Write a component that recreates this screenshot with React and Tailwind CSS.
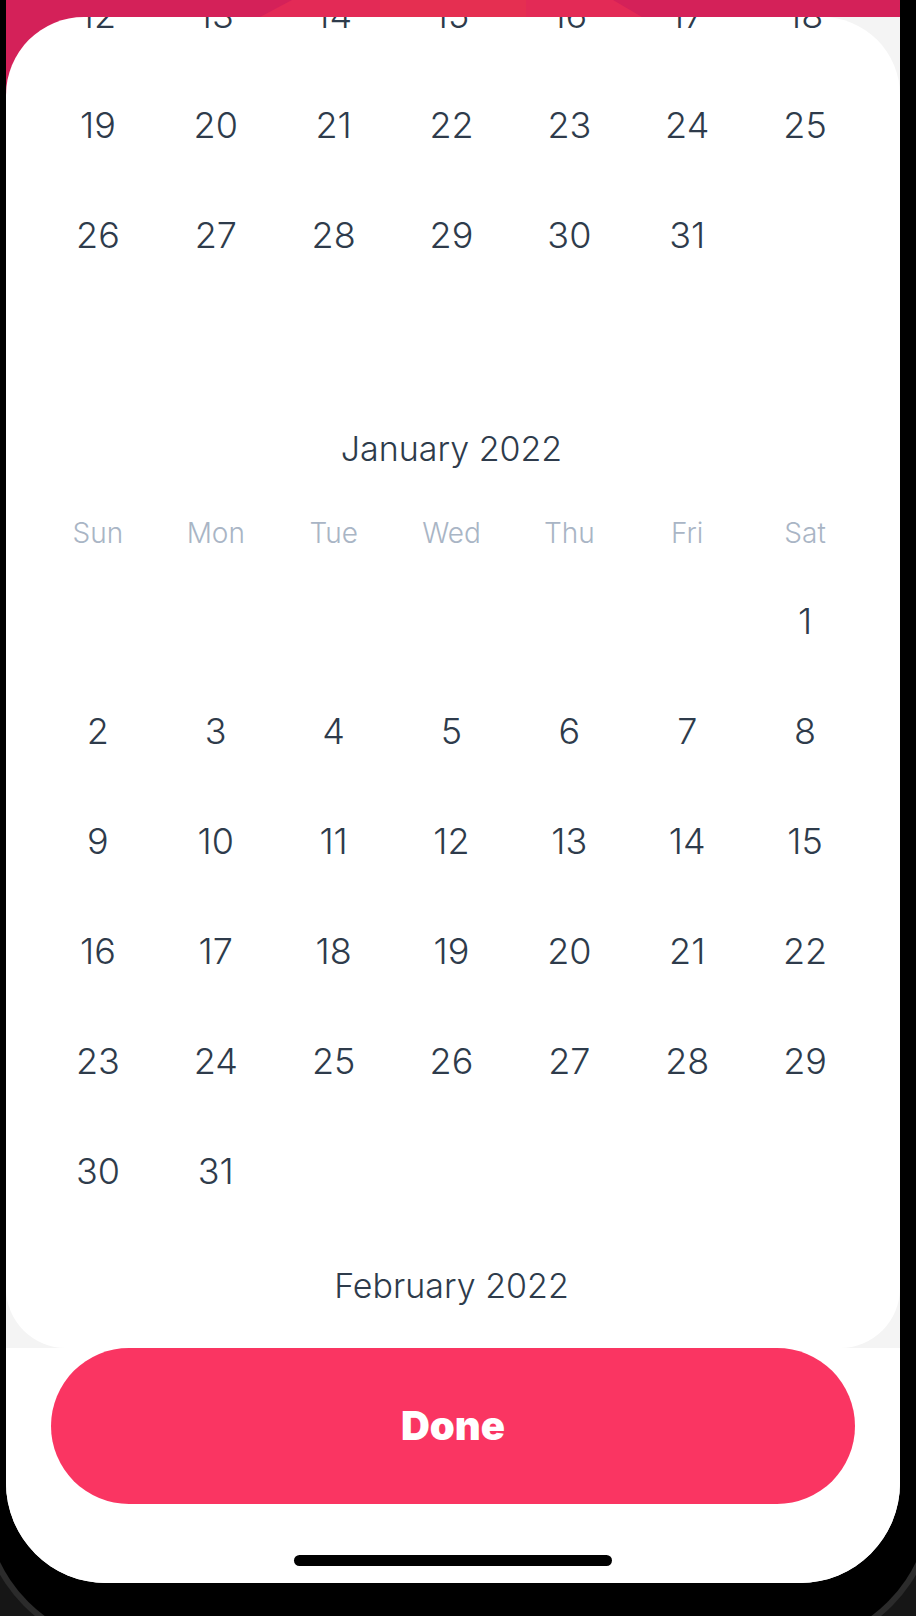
import React from 'react';

const WEEKDAYS = ['Sun', 'Mon', 'Tue', 'Wed', 'Thu', 'Fri', 'Sat'];

// builds week rows for a month, padding the first and last week with blanks
const buildWeeks = (year, month) => {
  const first = new Date(year, month, 1).getDay();
  const days = new Date(year, month + 1, 0).getDate();
  const cells = [...Array(first).fill(null), ...Array.from({ length: days }, (_, i) => i + 1)];
  while (cells.length % 7) cells.push(null);
  const weeks = [];
  for (let i = 0; i < cells.length; i += 7) weeks.push(cells.slice(i, i + 7));
  return weeks;
};

const MONTHS = [
  { label: 'December 2021', year: 2021, month: 11 },
  { label: 'January 2022', year: 2022, month: 0 },
  { label: 'February 2022', year: 2022, month: 1 },
];

const Month = ({ label, year, month }) => {
  const weeks = buildWeeks(year, month);
  return (
    <section className="min-h-[826px]">
      <h2 className="pt-[38px] text-center text-[34px] font-light leading-[44px] text-[#2e3b4b]">{label}</h2>
      <div className="grid grid-cols-7 pt-[44px] pb-[15px]">
        {WEEKDAYS.map((d) => (
          <span key={d} className="text-center text-[28px] font-light leading-[36px] text-[#a9b5c5]">
            {d}
          </span>
        ))}
      </div>
      {weeks.map((week, wi) => (
        <div key={wi} className="grid grid-cols-7">
          {week.map((day, di) => (
            <div key={di} className="flex h-[110px] items-center justify-center text-[36px] font-light text-[#2e3b4b]">
              {day}
            </div>
          ))}
        </div>
      ))}
    </section>
  );
};

const App = () => {
  return (
    <div className="h-[1616px] w-[916px] overflow-hidden bg-[#161616] font-['Inter','Noto_Sans',sans-serif]">
      <div className="-mx-[20px] h-[1650px] rounded-b-[150px] border-x-[6px] border-b-[6px] border-[#2b2b2b] bg-black">
        <div className="ml-[20px] flex h-[1583px] w-[894px] flex-col overflow-hidden rounded-b-[100px] bg-white">
          {/* strip of the screen underneath the sheet */}
          <svg width="894" height="17" viewBox="0 0 894 17" className="block shrink-0">
            <rect width="894" height="17" fill="#d42159" />
            <polygon points="286,0 607,0 636,17 254,17" fill="#e32a56" />
            <polygon points="374,0 520,0 520,17 374,17" fill="#e52f51" />
          </svg>

          <div className="h-[1331px] shrink-0 bg-[#f4f4f4] bg-[linear-gradient(#d42159,#d42159)] bg-[length:100px_100px] bg-no-repeat">
            <div className="h-full overflow-hidden rounded-t-[78px] rounded-b-[60px] bg-white">
              <div className="-mt-[454px] pl-[33px] pr-[36px]">
                {MONTHS.map((m) => (
                  <Month key={m.label} {...m} />
                ))}
              </div>
            </div>
          </div>

          <div className="flex flex-1 flex-col items-center bg-white">
            <button className="h-[156px] w-[804px] rounded-full bg-[#fa3562] text-[40px] font-black text-white">
              Done
            </button>
            <div className="mt-[51px] h-[11px] w-[318px] rounded-full bg-black" />
          </div>
        </div>
      </div>
    </div>
  );
};

export default App;
